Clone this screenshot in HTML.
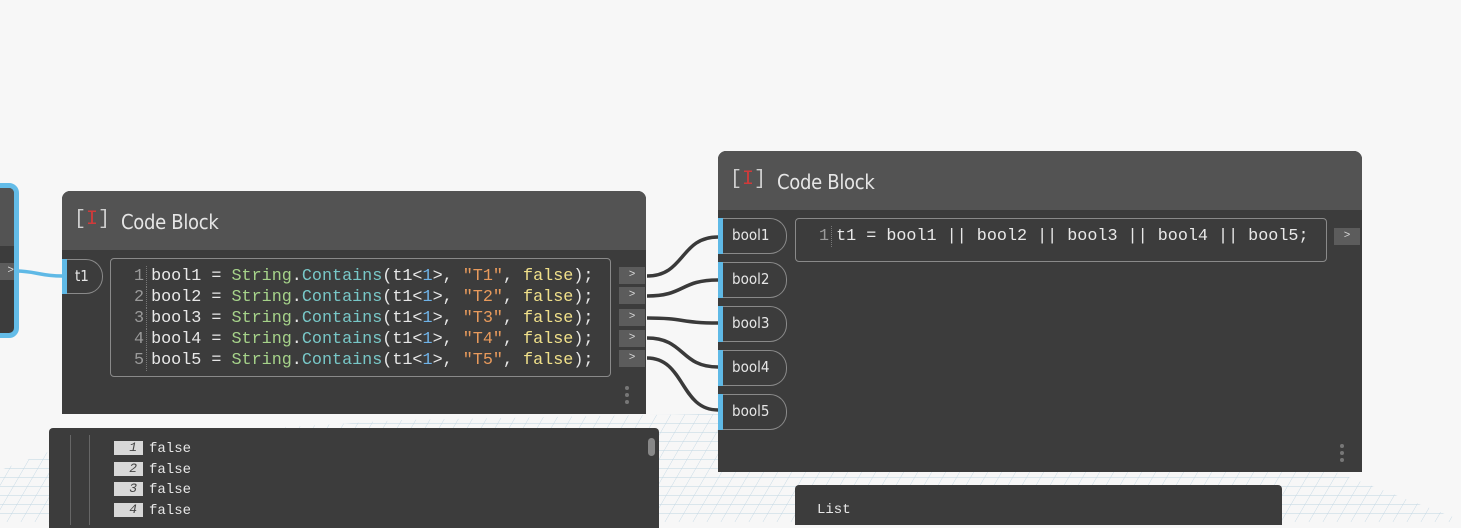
<!DOCTYPE html>
<html><head><meta charset="utf-8"><style>
*{margin:0;padding:0;box-sizing:border-box}
body{width:1461px;height:522px;overflow:hidden;background:#f7f7f7;position:relative;font-family:"Liberation Sans",sans-serif}
.abs{position:absolute}
.node{position:absolute;background:#3c3c3c;border-radius:8px 8px 0 0}
.hdr{position:absolute;left:0;right:0;top:0;background:#535353;border-radius:8px 8px 0 0}
.title{position:absolute;color:#e6e6e6;font-size:20px;font-family:"DejaVu Sans Condensed","Liberation Sans Narrow","Liberation Sans",sans-serif;letter-spacing:-0.3px}
.ico{position:absolute;font-family:"Liberation Mono",monospace;color:#cfcfcf;font-size:20px}
.ico b{color:#d03a3a;font-weight:normal}
.port{position:absolute;background:#3c3c3c;border:1.5px solid #8a8a8a;border-left:none;border-radius:0 17px 17px 0;color:#e6e6e6;font-size:15px;font-family:"DejaVu Sans Condensed","Liberation Sans Narrow",sans-serif}
.port:before{content:"";position:absolute;left:0;top:-1px;bottom:-1px;width:5px;background:#5fb9e6}
.code{position:absolute;border:1.5px solid #8a8a8a;border-radius:4px;font-family:"Liberation Mono",monospace;font-size:16.75px;color:#e8e8e8;white-space:pre}
.ln{color:#9a9a9a;display:inline-block;text-align:right;border-right:1px dotted #777;padding-right:2px;margin-right:4px}
.g{color:#a6d38a}.c{color:#78c8c8}.b{color:#6fb3e8}.o{color:#e89a5c}.y{color:#f0e08a}
.op{position:absolute;width:26px;height:17px;background:#5c5c5c;color:#d8d8d8;font-size:11px;text-align:center;line-height:17px;font-family:"Liberation Mono",monospace}
.dots{position:absolute;width:4px}
.dots i{display:block;width:4px;height:4px;border-radius:2px;background:#777;margin-bottom:3px}
.wl{font-family:"Liberation Mono",monospace;font-size:14px;color:#e8e8e8;position:absolute;left:114px;height:16px}
.wl span{display:inline-block;width:29px;height:14px;background:#d8d8d8;color:#444;font-style:italic;text-align:right;padding-right:6px;font-size:13px;line-height:14px;margin-right:6px;vertical-align:middle}
</style></head><body>
<svg class="abs" style="left:0;top:0" width="1461" height="522">
<defs><pattern id="gr" width="14" height="9" patternUnits="userSpaceOnUse" patternTransform="skewX(-30)"><path d="M0 0H14M0 0V9" stroke="#c4d8e4" stroke-width="1" fill="none"/></pattern></defs>
<polygon points="0,470 80,440 400,420 900,410 1200,420 1461,520 1461,522 0,522" fill="url(#gr)"/>
<g stroke="#3a3a3a" stroke-width="3.5" fill="none">
<path d="M647 276 C685 276 680 237 718 237"/>
<path d="M647 296 C685 296 680 280 718 280"/>
<path d="M647 318 C685 318 680 323 718 323"/>
<path d="M647 338 C685 338 680 367 718 367"/>
<path d="M647 358 C685 358 680 410 718 410"/>
</g>
<path d="M16 271 C35 271 40 276 62 276" stroke="#5fb9e6" stroke-width="3.5" fill="none"/>
</svg>

<div class="abs" style="left:-10px;top:183px;width:29px;height:155px;border:5px solid #63bce8;border-radius:0 10px 10px 0;background:#3c3c3c;overflow:hidden">
<div style="position:absolute;left:0;right:0;top:0;height:58px;background:#535353"></div>
<div style="position:absolute;left:0;right:0;top:75px;height:17px;background:#5c5c5c;color:#ddd;font-size:11px;text-align:right;line-height:17px;font-family:'Liberation Mono',monospace">&gt;</div>
</div>

<div class="node" style="left:62px;top:191px;width:584px;height:223px">
<div class="hdr" style="height:59px"></div>
<div class="ico" style="left:12px;top:17px">[<b>I</b>]</div>
<div class="title" style="left:59px;top:19px">Code Block</div>
<div class="port" style="left:0;top:68px;width:41px;height:35px;line-height:32px;padding-left:13px">t1</div>
<div class="code" style="left:48px;top:67px;width:501px;height:119px;padding-top:7px;padding-left:23px;line-height:21px"><span class="ln">1</span>bool1 = <span class="g">String</span>.<span class="c">Contains</span>(t1&lt;<span class="b">1</span>&gt;, <span class="o">"T1"</span>, <span class="y">false</span>);
<span class="ln">2</span>bool2 = <span class="g">String</span>.<span class="c">Contains</span>(t1&lt;<span class="b">1</span>&gt;, <span class="o">"T2"</span>, <span class="y">false</span>);
<span class="ln">3</span>bool3 = <span class="g">String</span>.<span class="c">Contains</span>(t1&lt;<span class="b">1</span>&gt;, <span class="o">"T3"</span>, <span class="y">false</span>);
<span class="ln">4</span>bool4 = <span class="g">String</span>.<span class="c">Contains</span>(t1&lt;<span class="b">1</span>&gt;, <span class="o">"T4"</span>, <span class="y">false</span>);
<span class="ln">5</span>bool5 = <span class="g">String</span>.<span class="c">Contains</span>(t1&lt;<span class="b">1</span>&gt;, <span class="o">"T5"</span>, <span class="y">false</span>);</div>
<div class="op" style="left:557px;top:76px">&gt;</div>
<div class="op" style="left:557px;top:96px">&gt;</div>
<div class="op" style="left:557px;top:118px">&gt;</div>
<div class="op" style="left:557px;top:139px">&gt;</div>
<div class="op" style="left:557px;top:159px">&gt;</div>
<div class="dots" style="left:563px;top:195px"><i></i><i></i><i></i></div>
</div>

<div class="abs" style="left:49px;top:428px;width:610px;height:100px;background:#3c3c3c;border-radius:4px 4px 0 0">
<div class="abs" style="left:21px;top:7px;width:1px;height:90px;background:#666"></div>
<div class="abs" style="left:40px;top:7px;width:1px;height:90px;background:#666"></div>
<div class="abs" style="left:599px;top:10px;width:7px;height:18px;border-radius:4px;background:#888"></div>
</div>
<div class="wl" style="top:441px"><span>1</span>false</div>
<div class="wl" style="top:462px"><span>2</span>false</div>
<div class="wl" style="top:482px"><span>3</span>false</div>
<div class="wl" style="top:503px"><span>4</span>false</div>

<div class="node" style="left:718px;top:151px;width:644px;height:321px">
<div class="hdr" style="height:59px"></div>
<div class="ico" style="left:12px;top:17px">[<b>I</b>]</div>
<div class="title" style="left:59px;top:19px">Code Block</div>
<div class="port" style="left:0;top:67px;width:69px;height:36px;line-height:33px;padding-left:14px">bool1</div>
<div class="port" style="left:0;top:111px;width:69px;height:36px;line-height:33px;padding-left:14px">bool2</div>
<div class="port" style="left:0;top:155px;width:69px;height:36px;line-height:33px;padding-left:14px">bool3</div>
<div class="port" style="left:0;top:199px;width:69px;height:36px;line-height:33px;padding-left:14px">bool4</div>
<div class="port" style="left:0;top:243px;width:69px;height:36px;line-height:33px;padding-left:14px">bool5</div>
<div class="code" style="left:77px;top:67px;width:532px;height:44px;padding-top:7px;padding-left:23px;line-height:21px"><span class="ln">1</span>t1 = bool1 || bool2 || bool3 || bool4 || bool5;</div>
<div class="op" style="left:616px;top:77px">&gt;</div>
<div class="dots" style="left:622px;top:293px"><i></i><i></i><i></i></div>
</div>

<div class="abs" style="left:795px;top:485px;width:487px;height:40px;background:#3c3c3c;border-radius:4px 4px 0 0">
<div style="position:absolute;left:22px;top:17px;color:#e8e8e8;font-family:'Liberation Mono',monospace;font-size:14px">List</div>
</div>
</body></html>
